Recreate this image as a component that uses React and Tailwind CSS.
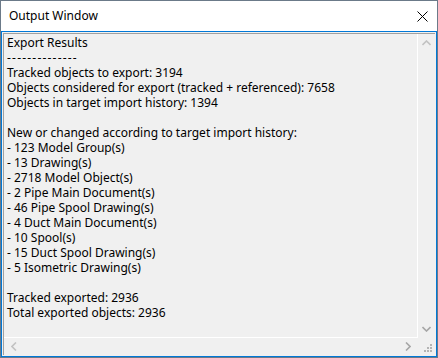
import React from "react";

const lines = [
  "Export Results",
  "--------------",
  "Tracked objects to export: 3194",
  "Objects considered for export (tracked + referenced): 7658",
  "Objects in target import history: 1394",
  "",
  "New or changed according to target import history:",
  "- 123 Model Group(s)",
  "- 13 Drawing(s)",
  "- 2718 Model Object(s)",
  "- 2 Pipe Main Document(s)",
  "- 46 Pipe Spool Drawing(s)",
  "- 4 Duct Main Document(s)",
  "- 10 Spool(s)",
  "- 15 Duct Spool Drawing(s)",
  "- 5 Isometric Drawing(s)",
  "",
  "Tracked exported: 2936",
  "Total exported objects: 2936",
];

export default function App() {
  return (
    <div className="w-[438px] h-[358px] border border-[#6b7a89] bg-white flex flex-col font-['Noto_Sans',sans-serif] text-black">
      <div className="h-[30px] flex items-center justify-between pl-[8px] pr-[9px] shrink-0">
        <span className="text-[12px] leading-none">Output Window</span>
        <svg width="11" height="11" viewBox="0 0 11 11">
          <path d="M0.5 0.5 L10.5 10.5 M10.5 0.5 L0.5 10.5" stroke="#000" strokeWidth="1" fill="none" />
        </svg>
      </div>
      <div className="flex-1 min-h-0 border border-[#0078d7] p-px bg-[#f0f0f0] flex">
        <div className="flex-1 min-h-0 border-t border-l border-[#a0a0a0] grid grid-cols-[1fr_17px] grid-rows-[1fr_17px]">
          <div className="overflow-hidden pl-[3px] pt-[1px] text-[12px] leading-[15px] whitespace-pre border-r border-b border-white">
            {lines.map((l, i) => (
              <div key={i} className={i === 1 ? "h-[15px] tracking-[1.2px]" : "h-[15px]"}>{l}</div>
            ))}
          </div>
          <div className="flex flex-col items-center justify-between py-[6px]">
            <svg width="9" height="6" viewBox="0 0 9 6">
              <path d="M0.5 5 L4.5 1 L8.5 5" stroke="#c2c2c2" strokeWidth="1.6" fill="none" />
            </svg>
            <svg width="9" height="6" viewBox="0 0 9 6">
              <path d="M0.5 1 L4.5 5 L8.5 1" stroke="#a6a6a6" strokeWidth="1.6" fill="none" />
            </svg>
          </div>
          <div className="flex items-center justify-between px-[7px]">
            <svg width="6" height="9" viewBox="0 0 6 9">
              <path d="M5 0.5 L1 4.5 L5 8.5" stroke="#c2c2c2" strokeWidth="1.6" fill="none" />
            </svg>
            <svg width="6" height="9" viewBox="0 0 6 9">
              <path d="M1 0.5 L5 4.5 L1 8.5" stroke="#a6a6a6" strokeWidth="1.6" fill="none" />
            </svg>
          </div>
          <div className="relative">
            <svg width="17" height="17" viewBox="0 0 17 17" className="absolute inset-0">
              <rect x="12" y="6" width="2" height="2" fill="#b4b4b4" />
              <rect x="9" y="9" width="2" height="2" fill="#b4b4b4" />
              <rect x="12" y="9" width="2" height="2" fill="#b4b4b4" />
              <rect x="6" y="12" width="2" height="2" fill="#b4b4b4" />
              <rect x="9" y="12" width="2" height="2" fill="#b4b4b4" />
              <rect x="12" y="12" width="2" height="2" fill="#b4b4b4" />
            </svg>
          </div>
        </div>
      </div>
    </div>
  );
}
